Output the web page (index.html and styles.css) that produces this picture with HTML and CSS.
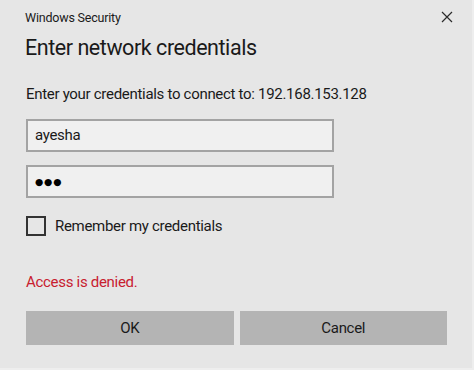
FILE: index.html
```html
<!DOCTYPE html>
<html lang="en">
<head>
  <meta charset="UTF-8">
  <link rel="stylesheet" href="styles.css">
  <title>Windows Security</title>
</head>
<body>
  <div class="dialog">
    <!-- Title bar -->
    <div class="titlebar">
      <span class="app-name">Windows Security</span>
      <svg class="close" width="12" height="12" viewBox="0 0 12 12">
        <path d="M1 1 L11 11 M11 1 L1 11" stroke="#2b2b2b" stroke-width="1.2" fill="none"/>
      </svg>
    </div>

    <h1 class="heading">Enter network credentials</h1>
    <p class="target">Enter your credentials to connect to: 192.168.153.128</p>

    <!-- Fields -->
    <div class="fields">
      <div class="field">ayesha</div>
      <div class="field password">&#9679;&#9679;&#9679;</div>
    </div>

    <label class="remember">
      <span class="checkbox"></span>
      Remember my credentials
    </label>

    <p class="error">Access is denied.</p>

    <div class="buttons">
      <div class="btn">OK</div>
      <div class="btn">Cancel</div>
    </div>
  </div>
</body>
</html>
```

FILE: styles.css
```css
/* General Styles */
body {
  margin: 0;
  background: #e6e6e6;
  font-family: Roboto, "Noto Sans", sans-serif;
  color: #1a1a1a;
  letter-spacing: -0.3px;
}

.dialog {
  width: 474px;
  height: 370px;
  box-sizing: border-box;
  padding: 0 26px 0 26px;
  border-right: 2px solid #eeeeee;
  border-bottom: 2px solid #eeeeee;
}

/* Title bar */
.titlebar {
  display: flex;
  justify-content: space-between;
  align-items: center;
  height: 34px;
  margin-right: -7px;
}

.app-name {
  font-size: 12.5px;
  letter-spacing: -0.2px;
  margin-left: -1px;
}

.heading {
  margin: 0;
  font-weight: normal;
  font-size: 21.5px;
  letter-spacing: -0.45px;
  line-height: 28px;
  margin-left: -1px;
}

.target {
  margin: 22px 0 0 0;
  font-size: 15px;
  line-height: 20px;
}

/* Inputs */
.fields {
  display: flex;
  flex-direction: column;
  gap: 13px;
  margin-top: 15px;
}

.field {
  width: 308px;
  height: 33px;
  box-sizing: border-box;
  border: 2px solid #a3a3a3;
  background: #f0f0f0;
  padding: 0 7px;
  font-size: 15px;
  line-height: 29px;
}

.password {
  font-family: "DejaVu Sans", sans-serif;
  font-size: 9.5px;
  letter-spacing: 0.8px;
  color: #000000;
}

/* Checkbox */
.remember {
  display: flex;
  align-items: center;
  gap: 9px;
  margin-top: 18px;
  font-size: 15px;
  line-height: 20px;
}

.checkbox {
  width: 20px;
  height: 20px;
  box-sizing: border-box;
  border: 2px solid #333333;
}

.error {
  margin: 36px 0 0 0;
  font-size: 15px;
  line-height: 20px;
  color: #c8202f;
}

/* Buttons */
.buttons {
  display: flex;
  gap: 6px;
  margin-top: 19px;
  margin-right: -1px;
}

.btn {
  flex: 1;
  height: 34px;
  background: #b4b4b4;
  text-align: center;
  font-size: 15px;
  line-height: 34px;
}
```
